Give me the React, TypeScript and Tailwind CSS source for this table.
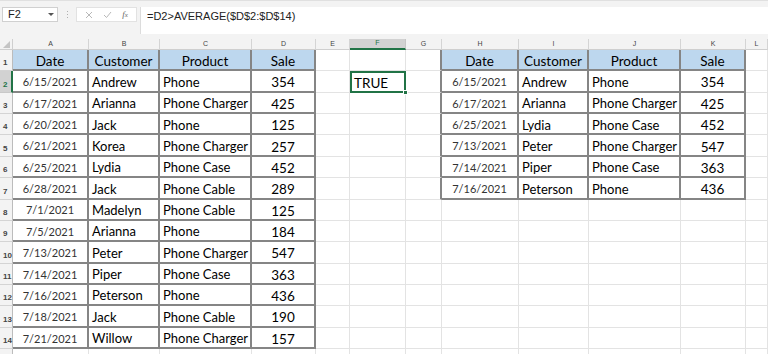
import React from "react";

const left: [string, string, string, string][] = [
  ["6/15/2021", "Andrew", "Phone", "354"],
  ["6/17/2021", "Arianna", "Phone Charger", "425"],
  ["6/20/2021", "Jack", "Phone", "125"],
  ["6/21/2021", "Korea", "Phone Charger", "257"],
  ["6/25/2021", "Lydia", "Phone Case", "452"],
  ["6/28/2021", "Jack", "Phone Cable", "289"],
  ["7/1/2021", "Madelyn", "Phone Cable", "125"],
  ["7/5/2021", "Arianna", "Phone", "184"],
  ["7/13/2021", "Peter", "Phone Charger", "547"],
  ["7/14/2021", "Piper", "Phone Case", "363"],
  ["7/16/2021", "Peterson", "Phone", "436"],
  ["7/18/2021", "Jack", "Phone Cable", "190"],
  ["7/21/2021", "Willow", "Phone Charger", "157"],
];

const right: [string, string, string, string][] = [
  ["6/15/2021", "Andrew", "Phone", "354"],
  ["6/17/2021", "Arianna", "Phone Charger", "425"],
  ["6/25/2021", "Lydia", "Phone Case", "452"],
  ["7/13/2021", "Peter", "Phone Charger", "547"],
  ["7/14/2021", "Piper", "Phone Case", "363"],
  ["7/16/2021", "Peterson", "Phone", "436"],
];

const letters = ["", "A", "B", "C", "D", "E", "F", "G", "H", "I", "J", "K", "L"];
const heads = ["Date", "Customer", "Product", "Sale"];

const gridCell = "border-r border-b border-[#e3e3e3] bg-white";
const tableCell = "border-r-2 border-b-2 border-[#858585] bg-white flex items-center pt-[3px] overflow-hidden whitespace-nowrap";
const headCell = "border-r-2 border-b-2 border-[#858585] bg-[#bdd7ee] flex items-center justify-center pt-[3px] text-[13.5px] text-black";

function dataCell(c: number, v: string, key: string) {
  if (c === 0)
    return (
      <div key={key} className={tableCell + " justify-center text-[11px] text-[#333]"}>
        {v}
      </div>
    );
  if (c === 3)
    return (
      <div key={key} className={tableCell + " justify-center text-[13.5px] text-black"}>
        {v}
      </div>
    );
  return (
    <div key={key} className={tableCell + " pl-[3px] text-[13px] text-black"}>
      {v}
    </div>
  );
}

function Row({ r }: { r: number }) {
  const cells: React.ReactNode[] = [];
  for (let c = 0; c < 13; c++) {
    const key = `${r}-${c}`;
    if (c === 0) {
      cells.push(
        <div
          key={key}
          className={
            r === 2
              ? "bg-[#d2d2d2] border-r-2 border-r-[#217346] border-b border-b-[#c8c8c8] flex items-end pl-[3px] pb-[1px] text-[8px] font-bold text-[#217346] font-['Liberation_Sans',sans-serif]"
              : "bg-[#f3f3f3] border-r border-r-[#bcbcbc] border-b border-b-[#d4d4d4] flex items-end pl-[3px] pb-[1px] text-[8px] font-bold text-[#444] font-['Liberation_Sans',sans-serif]"
          }
        >
          {r}
        </div>
      );
      continue;
    }
    if (c >= 1 && c <= 4 && r <= 14) {
      if (r === 1) {
        cells.push(
          <div key={key} className={headCell}>
            {heads[c - 1]}
          </div>
        );
      } else {
        cells.push(dataCell(c - 1, left[r - 2][c - 1], key));
      }
      continue;
    }
    if (c >= 8 && c <= 11 && r <= 7) {
      if (r === 1) {
        cells.push(
          <div key={key} className={headCell}>
            {heads[c - 8]}
          </div>
        );
      } else {
        cells.push(dataCell(c - 8, right[r - 2][c - 8], key));
      }
      continue;
    }
    if (c === 7 && r <= 7) {
      cells.push(<div key={key} className="border-r-2 border-r-[#858585] border-b border-b-[#e3e3e3] bg-white" />);
      continue;
    }
    if (c === 6 && r === 2) {
      cells.push(
        <div
          key={key}
          className="relative border-2 border-[#217346] bg-white flex items-center pl-[2px] pt-[3px] text-[13.5px] text-black"
        >
          TRUE
          <div className="absolute right-[-4px] bottom-[-4px] w-[5px] h-[5px] bg-[#217346] border border-white" />
        </div>
      );
      continue;
    }
    cells.push(<div key={key} className={gridCell} />);
  }
  return <>{cells}</>;
}

export default function App() {
  return (
    <div className="w-[768px] h-[354px] overflow-hidden bg-white font-['Lato',sans-serif] flex flex-col">
      <div className="h-[39px] shrink-0 bg-[#f3f3f3] flex items-start pt-[6px] border-t border-[#e0e0e0]">
        <div className="ml-[2px] w-[56px] h-[15px] bg-white border border-[#d0d0d0] flex items-center justify-between pl-[5px] pr-[3px] text-[11px] text-[#222] font-['Liberation_Sans',sans-serif]">
          <span>F2</span>
          <span className="w-0 h-0 border-l-[3px] border-r-[3px] border-t-[3px] border-l-transparent border-r-transparent border-t-[#555]" />
        </div>
        <div className="w-[18px] h-[15px] flex flex-col items-center justify-center gap-[2px]">
          <span className="w-[1px] h-[1px] bg-[#b0b0b0]" />
          <span className="w-[1px] h-[1px] bg-[#b0b0b0]" />
          <span className="w-[1px] h-[1px] bg-[#b0b0b0]" />
        </div>
        <div className="w-[61px] h-[15px] bg-white border border-[#e2e2e2] flex items-center justify-around px-[3px] text-[#b5b5b5]">
          <svg width="8" height="8" viewBox="0 0 8 8"><path d="M1 1L7 7M7 1L1 7" stroke="#b8b8b8" strokeWidth="1" /></svg>
          <svg width="9" height="8" viewBox="0 0 9 8"><path d="M1 4L3.5 6.5L8 1" stroke="#b8b8b8" strokeWidth="1" fill="none" /></svg>
          <span className="text-[9px] italic font-['Liberation_Serif',serif] text-[#666]">f<span className="text-[7px]">x</span></span>
        </div>
        <div className="ml-[3px] flex-1 h-[27px] bg-white border-l border-[#dcdcdc] pl-[6px] pt-[2px] text-[11px] text-[#222] font-['Liberation_Sans',sans-serif] leading-[14px]">
          =D2&gt;AVERAGE($D$2:$D$14)
        </div>
      </div>
      <div className="grid grid-cols-[13px_76px_71px_92px_64px_34px_56px_36px_77px_70px_92px_65px_22px] grid-rows-[11px_repeat(15,21.36px)]">
        {letters.map((l, i) =>
          i === 0 ? (
            <div key="corner" className="bg-[#f3f3f3] border-r border-b border-[#cfcfcf] flex items-end justify-end pr-[2px] pb-[1px]">
              <div className="w-0 h-0 border-l-[7px] border-l-transparent border-b-[7px] border-b-[#c4c4c4]" />
            </div>
          ) : i === 6 ? (
            <div key={l} className="bg-[#d2d2d2] border-r border-r-[#c6c6c6] border-b-2 border-b-[#217346] flex items-center justify-center text-[7px] text-[#217346] font-['Liberation_Sans',sans-serif]">
              {l}
            </div>
          ) : (
            <div key={l} className="bg-[#f3f3f3] border-r border-r-[#d4d4d4] border-b border-b-[#cfcfcf] flex items-center justify-center text-[7px] text-[#444] font-['Liberation_Sans',sans-serif]">
              {l}
            </div>
          )
        )}
        {Array.from({ length: 15 }, (_, i) => (
          <Row key={i} r={i + 1} />
        ))}
      </div>
    </div>
  );
}
